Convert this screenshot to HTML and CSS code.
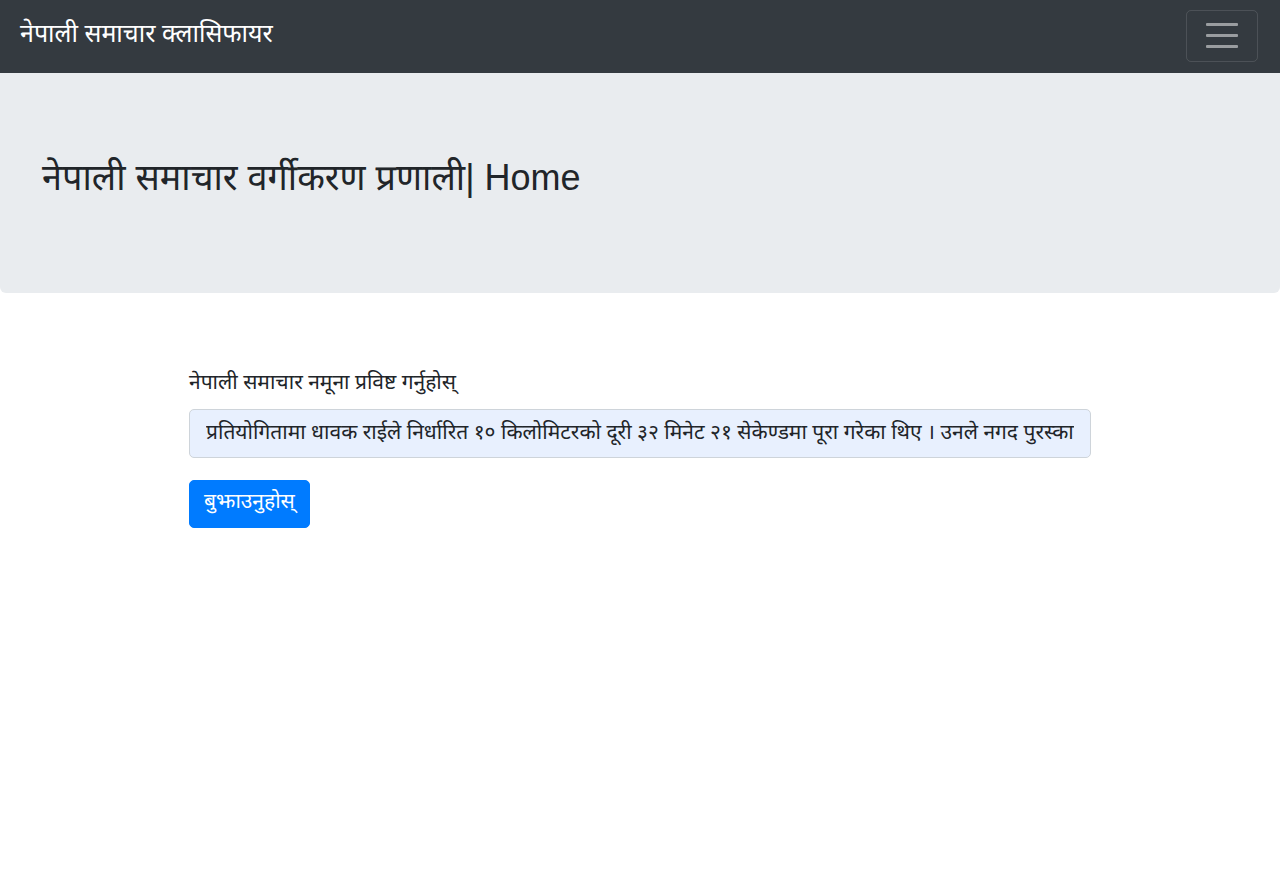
FILE: index.html
```html
<!DOCTYPE html>
<html lang="ne">
<head>
<meta charset="utf-8">
<title>नेपाली समाचार क्लासिफायर</title>
<link rel="stylesheet" href="styles.css">
</head>
<body>
<nav class="navbar">
  <span class="brand">नेपाली समाचार क्लासिफायर</span>
  <button class="toggler" type="button" aria-label="Toggle navigation">
    <span class="bar"></span><span class="bar"></span><span class="bar"></span>
  </button>
</nav>
<header class="jumbotron">
  <h3 class="title">नेपाली समाचार वर्गीकरण प्रणाली| Home</h3>
</header>
<main class="container">
  <form class="form">
    <label class="label" for="news">नेपाली समाचार नमूना प्रविष्ट गर्नुहोस्</label>
    <input class="input" id="news" type="text" value="प्रतियोगितामा धावक राईले निर्धारित १० किलोमिटरको दूरी ३२ मिनेट २१ सेकेण्डमा पूरा गरेका थिए । उनले नगद पुरस्कार प्राप्त गरे ।">
    <button class="btn" type="button">बुझाउनुहोस्</button>
  </form>
</main>
</body>
</html>
```
FILE: styles.css
```css
* { box-sizing: border-box; }
html, body { margin: 0; padding: 0; }
body {
  font-family: "Noto Sans Devanagari", "Lohit Devanagari", "Noto Sans", "Liberation Sans", sans-serif;
  font-size: 21px;
  line-height: 1.5;
  color: #212529;
  background: #fff;
}
.navbar {
  height: 73px;
  background: #343a40;
  display: flex;
  align-items: center;
  justify-content: space-between;
  padding: 0 22px 0 20px;
}
.brand {
  color: #fff;
  font-size: 25px;
  line-height: 1;
}
.toggler {
  width: 72px;
  height: 52px;
  background: transparent;
  border: 1px solid rgba(255,255,255,.12);
  border-radius: 5px;
  display: flex;
  flex-direction: column;
  align-items: center;
  justify-content: center;
  gap: 8px;
  padding: 0;
  margin-top: -2px;
}
.toggler .bar {
  display: block;
  width: 32px;
  height: 3px;
  border-radius: 1px;
  background: rgba(255,255,255,.5);
}
.jumbotron {
  background: #e9ecef;
  padding: 84px 42px;
  border-radius: 0 0 6px 6px;
  margin-bottom: 40px;
}
.title {
  margin: 0 0 10px;
  font-size: 36px;
  font-weight: 400;
  line-height: 42px;
  font-family: "Liberation Sans", "Noto Sans Devanagari", "Lohit Devanagari", sans-serif;
}
.container {
  width: 902px;
  margin: 0 auto 0 189px;
  padding-top: 36px;
}
.form {
  display: flex;
  flex-direction: column;
  align-items: flex-start;
}
.label {
  font-size: 21px;
  line-height: 30px;
  margin-bottom: 10px;
}
.input {
  width: 100%;
  height: 49px;
  font: inherit;
  font-size: 21px;
  color: #212529;
  background: #e8f0fe;
  border: 1px solid #ced4da;
  border-radius: 5px;
  padding: 0 16px;
  margin-bottom: 22px;
}
.btn {
  height: 48px;
  font: inherit;
  font-size: 21px;
  color: #fff;
  background: #007bff;
  border: 1px solid #007bff;
  border-radius: 5px;
  padding: 0 14px;
}
```
